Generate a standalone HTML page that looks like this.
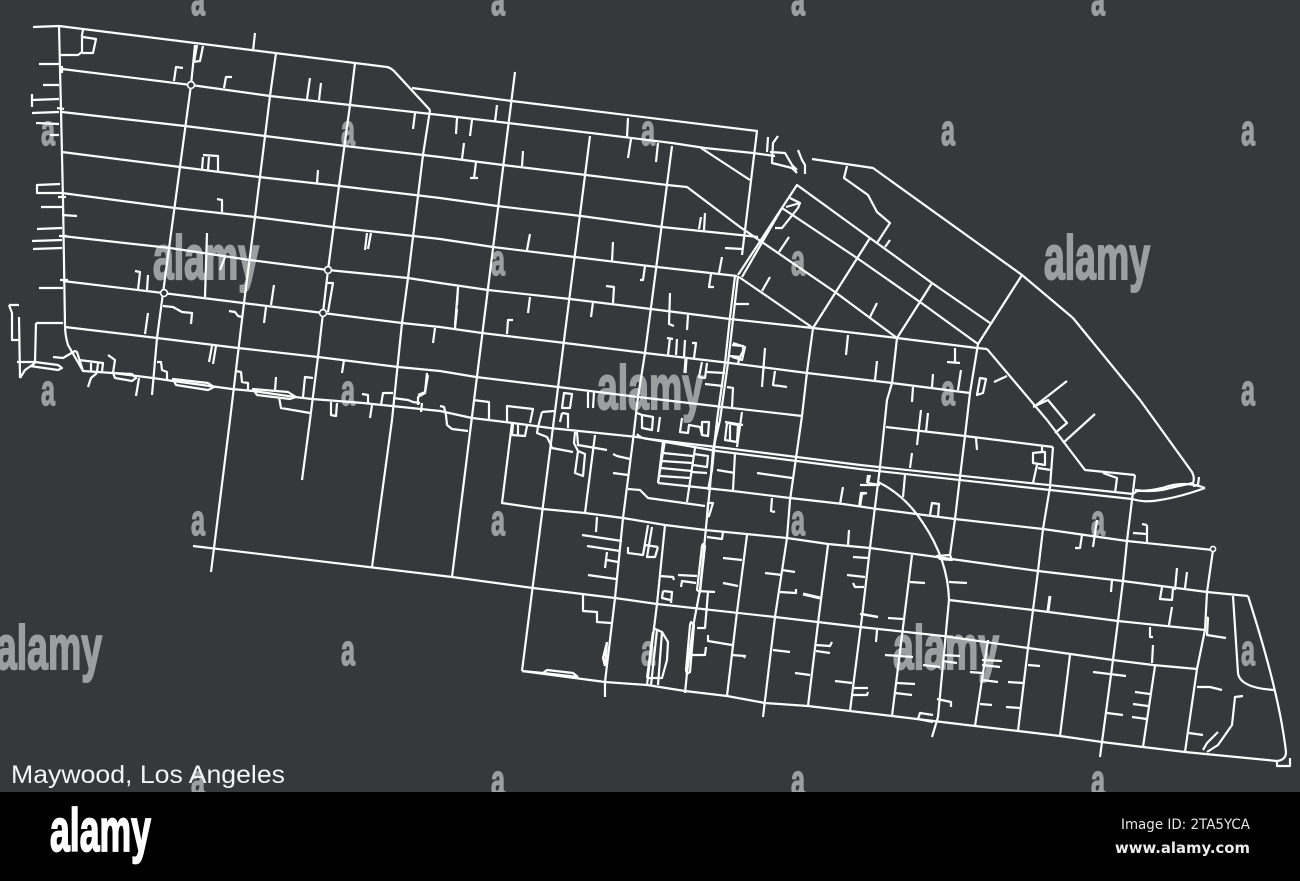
<!DOCTYPE html>
<html>
<head>
<meta charset="utf-8">
<title>Maywood, Los Angeles</title>
<style>
html,body{margin:0;padding:0;background:#000;width:1300px;height:881px;overflow:hidden}
svg{display:block}
.wm{font-family:"Liberation Sans",sans-serif;font-weight:bold;fill:#9d9e a0;fill:#9d9ea0;stroke:#9d9ea0;stroke-width:1.4}
</style>
</head>
<body>
<svg xmlns="http://www.w3.org/2000/svg" width="1300" height="881" viewBox="0 0 1300 881">
<rect width="1300" height="881" fill="#36383c"/>
<g class="wm" font-size="44" text-anchor="middle">
<text x="198" y="15" textLength="14" lengthAdjust="spacingAndGlyphs">a</text>
<text x="498" y="15" textLength="14" lengthAdjust="spacingAndGlyphs">a</text>
<text x="798" y="15" textLength="14" lengthAdjust="spacingAndGlyphs">a</text>
<text x="1098" y="15" textLength="14" lengthAdjust="spacingAndGlyphs">a</text>
<text x="48" y="145" textLength="14" lengthAdjust="spacingAndGlyphs">a</text>
<text x="348" y="145" textLength="14" lengthAdjust="spacingAndGlyphs">a</text>
<text x="648" y="145" textLength="14" lengthAdjust="spacingAndGlyphs">a</text>
<text x="948" y="145" textLength="14" lengthAdjust="spacingAndGlyphs">a</text>
<text x="1248" y="145" textLength="14" lengthAdjust="spacingAndGlyphs">a</text>
<text x="498" y="275" textLength="14" lengthAdjust="spacingAndGlyphs">a</text>
<text x="798" y="275" textLength="14" lengthAdjust="spacingAndGlyphs">a</text>
<text x="48" y="405" textLength="14" lengthAdjust="spacingAndGlyphs">a</text>
<text x="348" y="405" textLength="14" lengthAdjust="spacingAndGlyphs">a</text>
<text x="948" y="405" textLength="14" lengthAdjust="spacingAndGlyphs">a</text>
<text x="1248" y="405" textLength="14" lengthAdjust="spacingAndGlyphs">a</text>
<text x="198" y="535" textLength="14" lengthAdjust="spacingAndGlyphs">a</text>
<text x="498" y="535" textLength="14" lengthAdjust="spacingAndGlyphs">a</text>
<text x="798" y="535" textLength="14" lengthAdjust="spacingAndGlyphs">a</text>
<text x="1098" y="535" textLength="14" lengthAdjust="spacingAndGlyphs">a</text>
<text x="348" y="665" textLength="14" lengthAdjust="spacingAndGlyphs">a</text>
<text x="648" y="665" textLength="14" lengthAdjust="spacingAndGlyphs">a</text>
<text x="1248" y="665" textLength="14" lengthAdjust="spacingAndGlyphs">a</text>
<text x="198" y="795" textLength="14" lengthAdjust="spacingAndGlyphs">a</text>
<text x="498" y="795" textLength="14" lengthAdjust="spacingAndGlyphs">a</text>
<text x="798" y="795" textLength="14" lengthAdjust="spacingAndGlyphs">a</text>
<text x="1098" y="795" textLength="14" lengthAdjust="spacingAndGlyphs">a</text>
</g>
<g class="wm" font-size="62" stroke-width="2">
<text x="153" y="279" textLength="106" lengthAdjust="spacingAndGlyphs" style="stroke-width:2">alamy</text>
<text x="1044" y="279" textLength="106" lengthAdjust="spacingAndGlyphs" style="stroke-width:2">alamy</text>
<text x="597" y="409" textLength="106" lengthAdjust="spacingAndGlyphs" style="stroke-width:2">alamy</text>
<text x="-4" y="669" textLength="106" lengthAdjust="spacingAndGlyphs" style="stroke-width:2">alamy</text>
<text x="893" y="669" textLength="106" lengthAdjust="spacingAndGlyphs" style="stroke-width:2">alamy</text>
</g>
<g fill="none" stroke="#ffffff" stroke-width="2.2" stroke-linejoin="round" stroke-linecap="butt">
<!-- main east-west streets -->
<path d="M33,27L59,26L387,67Q391,68 394,71L430,110"/>
<path d="M412,88L512,101L757,131L742,255"/>
<path d="M59,26L61,110L63,200L65,325Q65,335 68,345L83,371L113,373L153,378L173,381L232,389L253,391L295,397L312,399L363,403L440,411L472,418L513,423L550,428L637,437"/>
<path d="M62,69L191,85L270,96L350,105L440,115L508,123L591,133L672,143L705,148L753,153L775,156"/>
<path d="M62,112L185,126L265,136L345,146L440,157L503,165L586,175L667,185L687,187L740,227L835,292L897,338"/>
<path d="M62,152L180,167L259,177L339,186L440,198L497,206L581,216L662,227L740,235L758,237"/>
<path d="M62,193L175,208L255,217L333,227L440,239L493,247L575,257L657,267L737,276"/>
<path d="M62,236L170,248L250,260L328,270L408,278L440,283L488,290L570,299L651,309L730,319L813,328L897,338L977,348L987,349"/>
<path d="M63,281L163,293L243,303L323,313L402,323L440,327L482,333L565,343L645,353L730,363L807,373L892,383L970,393"/>
<path d="M65,327L157,338L238,348L318,357L398,367L440,371L476,377L558,387L638,397L723,407L802,416"/>
<path d="M637,434Q640,438 648,439L717,447L860,465L1133,494L1137,491Q1150,491 1162,488Q1185,480 1205,488"/>
<path d="M637,437L660,441L717,451L860,469L1132,499Q1145,503 1160,500Q1180,497 1205,488"/>
<path d="M512,423L502,503L543,509L585,513L623,518L665,525L705,530L787,538L828,544L870,548L937,557L1038,571L1123,581L1207,592L1248,596"/>
<path d="M193,546L452,577L533,588L615,598L657,604L775,617L860,627L943,636L1028,648L1113,660L1153,665L1197,669"/>
<path d="M522,671L605,682L647,685L685,691L727,696L765,703L808,706L850,711L892,716L975,726L1018,731L1060,736L1102,742L1143,747L1185,752L1277,761"/>
<path d="M628,489L640,490L648,498L705,506"/>
<path d="M658,483L733,491L790,498L843,504L877,509L955,519L1043,529L1127,541L1213,550"/>
<path d="M949,600L1033,610L1118,621L1205,630"/>
<path d="M886,427L965,436L1053,447"/>
<!-- main north-south streets -->
<path d="M195,45L191,85L163,293L157,338L152,395"/>
<path d="M276,53L270,96L255,217L244,303L230,420L211,572"/>
<path d="M355,63L350,105L339,186L328,270L323,313L318,357L310,420L302,480"/>
<path d="M430,110L423,155L408,278L402,323L392,420L372,567"/>
<path d="M515,72L452,577"/>
<path d="M590,136L522,671"/>
<path d="M672,146L652,300L645,353L638,397L633,440L623,518L615,598L605,682L605,697"/>
<path d="M665,440L658,483M665,525L657,604L647,685"/>
<path d="M738,276L733,320L728,363L720,420L713,450L710,487L707,517L700,590L693,627L687,673L685,693"/>
<path d="M735,276L730,317L725,363L717,420L712,470L708,490"/>
<path d="M738,275L797,185L870,238L932,283L990,323M742,277L782,208L857,258L920,302L978,344"/>
<path d="M739,277L813,328M870,238L813,328L807,372L802,416L790,500L787,538L775,617L763,717"/>
<path d="M932,283L897,338L892,383L887,400L880,467L875,507L870,548L862,617L850,711"/>
<path d="M1022,275L978,344L970,393L965,436L960,477L955,519L950,555"/>
<path d="M878,482Q905,495 923,523Q948,560 949,600L938,717L932,737"/>
<path d="M1053,447L1050,487L1043,529L1038,571L1033,610L1028,648L1018,731"/>
<path d="M1135,475L1132,500L1127,541L1123,581L1118,621L1113,660L1102,742L1100,757"/>
<path d="M1213,550L1207,592L1205,630L1197,669L1185,752"/>
<path d="M747,535L737,612L727,696M828,545L818,623L808,706M912,555L892,716M1070,655L1060,736M1155,666L1143,747M988,640L975,726"/>
<path d="M595,435L585,513"/>
<!-- outer shore and NE -->
<path d="M812,159L873,168L1022,275L1073,318L1140,400L1192,472Q1195,478 1193,483Q1178,486 1162,490Q1148,492 1135,490"/>
<path d="M987,349L1047,420L1085,470L1135,475"/>
<path d="M1248,596C1262,640 1280,700 1286,752Q1286,760 1277,761M1277,761L1277,766L1290,766L1290,758"/>
<path d="M1233,596L1238,673Q1240,688 1275,690"/>
<path d="M847,166L844,178L868,195L877,212L890,223L877,243M890,240L885,247"/>
<path d="M1035,406L1067,381M1033,407L1048,400L1067,423L1055,433M1063,443L1095,414"/>
<path d="M768,137L767,152M778,136L773,143L772,163L792,168L797,173M770,152L785,153L792,165L797,170M798,150L802,160L805,165L805,174"/>
<path d="M786,207L800,203L798,208L782,228L775,228M790,198L800,203M789,237L779,252M770,277L762,291M877,303L870,317"/>
<path d="M848,335L846,355M877,361L875,380M955,348L955,362M947,362L960,363M933,374L932,387M961,370L958,390M913,387L912,402M977,395L980,378L986,379L983,393ZM994,382L1007,376"/>
<path d="M765,348L762,387M775,371L773,385L787,387M732,345L743,346L743,351L740,357L730,356M740,357L738,363M735,304L749,304M725,248L742,249"/>
<path d="M722,257L719,273M711,274L709,287L714,287M705,213L704,230M701,217L699,229"/>
<!-- west side stubs -->
<path d="M39,64L59,64M43,85L59,85M32,94L32,107M32,100L59,99M32,113L59,112M36,123L59,124M50,135L59,135M62,66L62,73M57,108L64,109M60,184L37,185L37,193L62,193M41,207L62,207M62,215L77,216M37,229L62,228M32,241L62,240M33,249L62,248M39,288L63,288M58,197L66,197M59,236L67,236M60,280L68,280"/>
<path d="M59,55L78,55L82,52L82,35L83,30M83,37L96,39L93,53L82,53"/>
<path d="M197,45L194,62M203,46L200,61L193,62M255,33L253,51M174,81L176,67L183,68M224,88L226,77L232,77M307,99L310,78M319,100L321,83M415,113L413,129"/>
<path d="M202,170L203,157M208,170L209,157M203,155L218,156L218,171M317,183L318,170M222,212L222,200L217,199M368,249L371,233M207,233L205,297M220,270L225,257"/>
<path d="M138,290L140,272L135,271M147,290L148,275M274,285L271,305M266,307L264,323M328,312L333,283L326,283M435,328L433,343"/>
<path d="M163,306L173,307L182,312L192,313L191,324M229,311L235,312L238,316L242,317M148,313L145,334M212,346L209,362M216,346L213,364M344,360L342,373"/>
<path d="M9,305L19,305M9,305L12,313L12,340L19,340M19,317L20,378M17,362L35,362L58,365L62,368L58,370L30,366M20,378L25,370L35,363M36,323L63,323M36,323L35,362"/>
<path d="M53,357L63,358L75,351L77,352L83,371M79,360L103,363L102,372M91,363L91,371M98,363L97,372M88,387L91,378L97,373M108,355L115,360L113,373"/>
<path d="M139,378L136,396M157,362L161,362L162,370L167,372L167,380M236,371L241,372L242,382L248,383L248,390M276,377L275,391M313,378L305,377L303,397M279,397L281,408L310,413M362,394L368,395L368,404M372,405L370,418M381,405L383,393L393,393M393,398L408,400L413,402L420,403M418,395L425,392L427,373M422,403L421,412M331,402L331,415L336,416L337,403M428,375L425,393L418,397L418,405"/>
<path d="M113,373L115,378L132,381L136,378L132,374ZM173,379L176,385L208,390L214,387L208,383ZM253,389L257,395L290,399L296,397L288,392Z"/>
<!-- centre north stubs -->
<path d="M497,105L495,122M628,118L627,137M457,118L456,134M472,120L470,136M631,139L628,158M658,143L656,162M464,143L462,159M523,151L522,166M476,162L474,178M470,178L478,178"/>
<path d="M530,234L527,250M613,242L612,261M645,266L643,280L640,280M458,287L457,305M457,309L455,328M606,286L614,287L613,303M530,297L528,313M593,302L591,317M670,293L669,324L674,326M688,315L687,330M513,320L508,320L507,334"/>
<path d="M701,148L750,180M367,233L365,250M458,288L455,325"/>
<path d="M440,406L444,407L446,415L447,425L452,429L468,431M473,400L489,402L489,419M507,422L507,406L533,409L530,423"/>
<path d="M513,424L512,435L525,436L527,426M518,424L518,435M542,412L554,411M542,412L538,427L537,433L547,437L550,443L552,448L573,452M562,413L568,414L568,428M562,413L560,422M564,393L572,394L570,408L562,408Z"/>
<path d="M575,432L574,443L578,451L575,473L583,476L585,454L578,451M577,432L578,445L607,450M613,454L617,456L630,459M613,473L628,475"/>
<path d="M588,392L588,408M594,392L593,408M667,338L673,339M670,338L668,355M677,339L676,355M685,340L684,357M692,343L696,343L694,358"/>
<path d="M686,359L685,373" stroke-width="3.2"/>
<path d="M702,362L699,377L705,378L707,363M707,372L725,373M705,384L723,386M727,387L733,388L732,408M642,415L642,428L652,430L653,417ZM637,413L642,415M660,417L658,432"/>
<path d="M682,418L680,432L688,433L689,425L700,427L702,435L708,436L709,422L702,422L702,435M717,422L714,446"/>
<path d="M725,422L743,425M727,423L738,425L737,442L725,440ZM730,425L730,440M742,412L737,447M735,453L733,490M717,470L735,473M733,343L745,347L742,360L732,357"/>
<!-- centre block -->
<path d="M663,442L658,483M663,453L693,456M662,461L692,463M661,468L692,471M660,476L690,478M695,448L687,502M694,454L708,456L707,467L693,465M692,472L707,473"/>
<path d="M757,473L792,478M772,498L771,511L775,512M843,487L840,504M865,493L861,493L859,507M867,483L880,485M870,475L868,483"/>
<path d="M597,517L596,532M582,535L622,541M587,546L620,551M607,552L605,568M607,560L618,562M588,575L616,579M583,595L583,611L597,612L597,622L611,623"/>
<path d="M607,642L603,658L605,666M607,642L605,666M628,547L628,553L643,555L645,545L658,547M648,525L643,555M652,527L647,557L655,557L658,547"/>
<path d="M522,671L543,673L547,670L573,673L578,677M543,673L578,677"/>
<path d="M653,628L662,632L668,642L667,660L662,678L647,678M657,630L651,685M662,632L658,685M653,632L647,678"/>
<path d="M690,625L686,670L687,674L690,672L694,625L691,622ZM702,546L697,590L700,592L705,546L703,544ZM708,503L707,517L709,516L713,503Z"/>
<path d="M707,537L722,539L723,532M678,575L697,576M681,587L682,581L696,583M660,576L673,577L674,580M663,591L672,592L671,603M663,591L662,598L670,600"/>
<path d="M698,591L715,592M708,592L705,628L697,628M708,635L708,641L732,645M706,647L705,655L692,655M723,558L742,560M723,583L738,586M732,655L745,656L744,658"/>
<path d="M765,573L782,575M782,570L795,572M780,592L796,593L796,589M773,650L790,652M795,673L810,675M816,645L830,646L832,642M816,651L830,653M835,681L852,683"/>
<path d="M803,594L820,598" stroke-width="3"/>
<path d="M853,688L868,688M853,695L867,695L868,692M853,557L868,558M847,575L865,577M853,583L855,587L864,587M862,614L878,617M849,530L848,546M877,630L876,642"/>
<!-- south-east stubs -->
<path d="M878,617L860,614M888,618L903,619M885,655L913,657M923,665L940,667M943,655L960,656M942,661L957,663M970,672L982,673M982,660L1002,661M982,665L1000,667M982,680L998,682M1008,682L1023,683M1028,665L1040,666M897,683L915,684M895,693L912,695M937,699L951,702L951,707M980,704L992,705M1006,707L1020,708M918,719L920,713L933,715M918,719L933,722"/>
<path d="M1093,672L1126,676M1107,713L1123,715M1135,692L1150,694M1133,704L1148,706M1132,717L1147,719M1197,687L1210,687L1222,690M1189,733L1203,735"/>
<path d="M1203,750L1207,743L1218,732M1207,752L1218,745L1232,725L1235,697L1243,696"/>
<path d="M1207,617L1208,618L1207,635L1226,638M1172,607L1169,625M1162,587L1160,599L1172,600L1173,588M1177,568L1175,590M1187,572L1185,588M1150,627L1150,637L1153,637M1153,645L1152,663M1112,580L1111,592"/>
<path d="M1050,596L1048,611" stroke-width="3"/>
<path d="M1082,535L1080,548L1075,548M1097,520L1093,547M1147,525L1147,542M1142,524L1147,525M1133,533L1147,534M976,438L977,450"/>
<path d="M921,410L917,445M928,413L926,432M912,453L910,468M905,475L903,497M868,475L867,483M860,485L877,485M867,493L862,494L860,507"/>
<path d="M930,515L932,503L939,504L938,517M910,582L925,583M949,582L967,583M937,556L950,555L952,560L940,559Z"/>
<path d="M1042,445L1042,452L1033,453L1033,463L1045,465L1045,452L1042,452M1037,465L1033,483M1038,468L1051,470M1103,473L1117,478L1115,493M1199,477L1198,485L1193,486"/>
</g>
<g fill="#36383c" stroke="#ffffff" stroke-width="1.6">
<circle cx="191" cy="85" r="3.4"/><circle cx="164" cy="293" r="3.4"/><circle cx="328" cy="270" r="3.4"/><circle cx="323" cy="313" r="3.4"/><circle cx="1213" cy="549" r="2.6"/>
</g>
<text x="11" y="783" font-family="'Liberation Sans',sans-serif" font-size="25" fill="#f4f4f4" textLength="274" lengthAdjust="spacingAndGlyphs">Maywood, Los Angeles</text>
<rect x="0" y="792" width="1300" height="89" fill="#000"/>
<text x="50" y="851" font-family="'Liberation Sans',sans-serif" font-weight="bold" font-size="60" fill="#fff" stroke="#fff" stroke-width="1.8" textLength="101" lengthAdjust="spacingAndGlyphs">alamy</text>
<text x="1121" y="829" font-family="'DejaVu Sans',sans-serif" font-size="14" fill="#e6e6e6" textLength="129" lengthAdjust="spacingAndGlyphs">Image ID: 2TA5YCA</text>
<text x="1115" y="853" font-family="'DejaVu Sans',sans-serif" font-weight="bold" font-size="15.5" fill="#ededed" textLength="135" lengthAdjust="spacingAndGlyphs">www.alamy.com</text>
</svg>
</body>
</html>
